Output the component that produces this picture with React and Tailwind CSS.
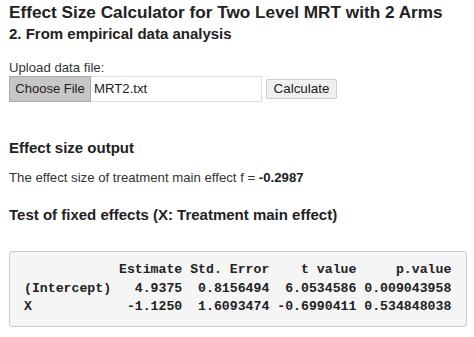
// Effect size calculator — Shiny-style page with file upload and lm output.

const rows = [
  '            Estimate Std. Error    t value     p.value',
  '(Intercept)   4.9375  0.8156494  6.0534586 0.009043958',
  'X            -1.1250  1.6093474 -0.6990411 0.534848038',
];

export default function App() {
  return (
    <div className="w-[474px] h-[337px] overflow-hidden bg-white px-[9px] text-[#333] font-['Liberation_Sans',Arial,sans-serif]">
      <h3 className="pt-[2px] text-[17.2px] leading-[20px] font-bold text-[#222]">
        Effect Size Calculator for Two Level MRT with 2 Arms
      </h3>
      <h4 className="mt-[3px] text-[15px] leading-[18px] font-bold text-[#222]">2. From empirical data analysis</h4>

      <div className="mt-[17px] text-[13.2px] leading-[16px]">Upload data file:</div>
      <div className="flex items-center">
        <div className="flex h-[26px]">
          <button className="w-[82px] h-full bg-[#c6c6c6] border border-[#a9a9a9] text-[13px] text-[#222]">
            Choose File
          </button>
          <div className="w-[171px] h-full border border-l-0 border-[#ddd] bg-white text-[13.2px] leading-[24px] pl-[3px] text-[#222]">
            MRT2.txt
          </div>
        </div>
        <button className="ml-[4px] w-[71px] h-[20px] bg-[#f0f0f0] border border-[#ccc] rounded-[2px] text-[13.4px] leading-[18px] text-[#222]">
          Calculate
        </button>
      </div>

      <h4 className="mt-[37px] text-[15px] leading-[18px] font-bold text-[#222]">Effect size output</h4>
      <p className="mt-[13px] text-[13.2px] leading-[16px]">
        The effect size of treatment main effect f = <b className="text-[#222]">-0.2987</b>
      </p>
      <h4 className="mt-[20px] text-[15px] leading-[18px] font-bold text-[#222]">
        Test of fixed effects (X: Treatment main effect)
      </h4>

      <pre className="mt-[27px] w-[458px] bg-[#f5f5f5] border border-[#ccc] rounded-[3px] px-[14px] py-[9px] text-[13.2px] leading-[18.5px] font-bold text-[#222] font-['Liberation_Mono','Courier_New',monospace] whitespace-pre">
        {rows.join('\n')}
      </pre>
    </div>
  );
}
